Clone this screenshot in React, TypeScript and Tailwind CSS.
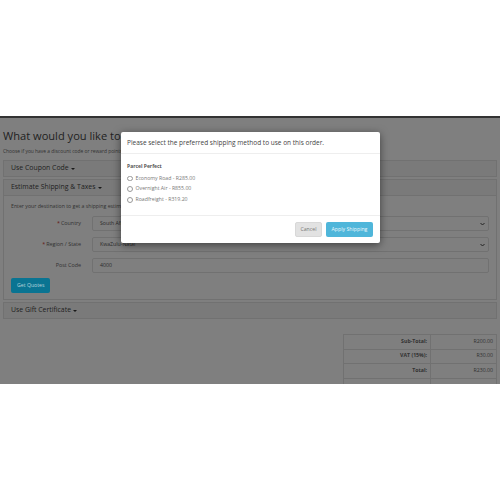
const font = { fontFamily: '"Open Sans", sans-serif' };

const Caret = () => <span className="ml-[2px] inline-block border-x-[2px] border-t-[2px] border-x-transparent border-t-[#333] align-middle" />;

const PanelHeading = ({ title }: { title: string }) => (
  <div className="flex h-[15px] items-center bg-[#f5f5f5] pl-[7px] text-[6.9px] text-[#444]">
    {title}
    <Caret />
  </div>
);

const Field = ({ label, value, required, select }: { label: string; value: string; required?: boolean; select?: boolean }) => (
  <div className="flex items-center">
    <label className="w-[81px] shrink-0 pr-[11px] text-right text-[5.4px] text-[#666]">
      {required && <span className="mr-[1px] text-[#c9302c]">*</span>}
      {label}
    </label>
    <div className="flex h-[15px] flex-1 items-center justify-between rounded-[2px] border border-[#e2e2e2] bg-white pl-[7px] pr-[3px] text-[5.2px] text-[#555]">
      {value}
      {select && (
        <svg width="5" height="4" viewBox="0 0 10 8" fill="none" stroke="#444" strokeWidth="2">
          <path d="m1 2 4 4 4-4" />
        </svg>
      )}
    </div>
  </div>
);

const totals = [
  ['Sub-Total:', 'R200.00'],
  ['VAT (15%):', 'R30.00'],
  ['Total:', 'R230.00'],
  ['', ''],
];

const options = ['Economy Road - R285.00', 'Overnight Air - R855.00', 'Roadfreight - R319.20'];

export default function App() {
  return (
    <div className="h-[500px] w-[500px] overflow-hidden bg-white" style={font}>
      <div className="h-[116px]" />
      <div className="relative h-[268px] overflow-hidden bg-white">
        {/* page behind the modal */}
        <div className="px-[3px] pt-[11px]">
          <h1 className="text-[11.1px] leading-[17px] text-[#444]">What would you like to do next?</h1>
          <p className="mt-[4px] text-[4.9px] leading-[7px] text-[#666]">
            Choose if you have a discount code or reward points you want to use or would like to estimate your delivery cost.
          </p>
          <div className="mt-[5px] flex flex-col gap-[2px]">
            <div className="border border-[#e2e2e2]"><PanelHeading title="Use Coupon Code" /></div>
            <div className="border border-[#e2e2e2]">
              <PanelHeading title="Estimate Shipping & Taxes" />
              <div className="border-t border-[#e2e2e2] px-[7px] pb-[6px] pt-[6px]">
                <p className="text-[5.2px] leading-[8px] text-[#666]">Enter your destination to get a shipping estimate.</p>
                <div className="mt-[6px] flex flex-col gap-[6px]">
                  <Field label="Country" value="South Africa" required select />
                  <Field label="Region / State" value="KwaZulu-Natal" required select />
                  <Field label="Post Code" value="4000" />
                </div>
                <button className="relative z-10 mt-[5px] block h-[15px] rounded-[2px] bg-[#0a7492] px-[6px] text-[5.2px] text-[#b8d4de]">Get Quotes</button>
              </div>
            </div>
            <div className="border border-[#e2e2e2]"><PanelHeading title="Use Gift Certificate" /></div>
          </div>
          <table className="ml-auto mt-[15px] w-[154px] border-collapse text-[5.2px] text-[#666]">
            <tbody>
              {totals.map(([name, amount], i) => (
                <tr key={i} className="h-[14.5px]">
                  <td className="w-[87px] border border-[#e2e2e2] pr-[3px] text-right font-bold">{name}</td>
                  <td className="border border-[#e2e2e2] pr-[3px] text-right">{amount}</td>
                </tr>
              ))}
            </tbody>
          </table>
        </div>

        {/* backdrop */}
        <div className="absolute inset-0 bg-black/50 shadow-[inset_0_2px_0_#333]" />

        {/* modal */}
        <div className="absolute left-[121px] top-[16px] z-20 w-[259px] rounded-[2px] bg-white shadow-[0_2px_8px_rgba(0,0,0,0.5)]">
          <div className="flex h-[22px] items-center border-b border-[#eee] px-[6px] text-[6.5px] text-[#444]">
            Please select the preferred shipping method to use on this order.
          </div>
          <div className="h-[61px] px-[6px] pt-[8px]">
            <p className="text-[5px] font-bold leading-[8px] text-[#555]">Parcel Perfect</p>
            <div className="mt-[3px] flex flex-col">
              {options.map((o) => (
                <div key={o} className="flex h-[10.8px] items-center gap-[3px] text-[5.2px] text-[#777]">
                  <span className="size-[5.5px] rounded-full border-[0.5px] border-[#999] bg-white" />
                  {o}
                </div>
              ))}
            </div>
          </div>
          <div className="flex h-[28px] items-center justify-end gap-[4px] border-t border-[#eee] px-[7px]">
            <button className="h-[15px] w-[27px] rounded-[2px] border border-[#d8d8d8] bg-[#e2e2e2] text-[5.2px] text-[#777]">Cancel</button>
            <button className="h-[15px] w-[47px] rounded-[2px] bg-[#4fb6da] text-[5.2px] text-[#eef8fc]">Apply Shipping</button>
          </div>
        </div>
      </div>
    </div>
  );
}
